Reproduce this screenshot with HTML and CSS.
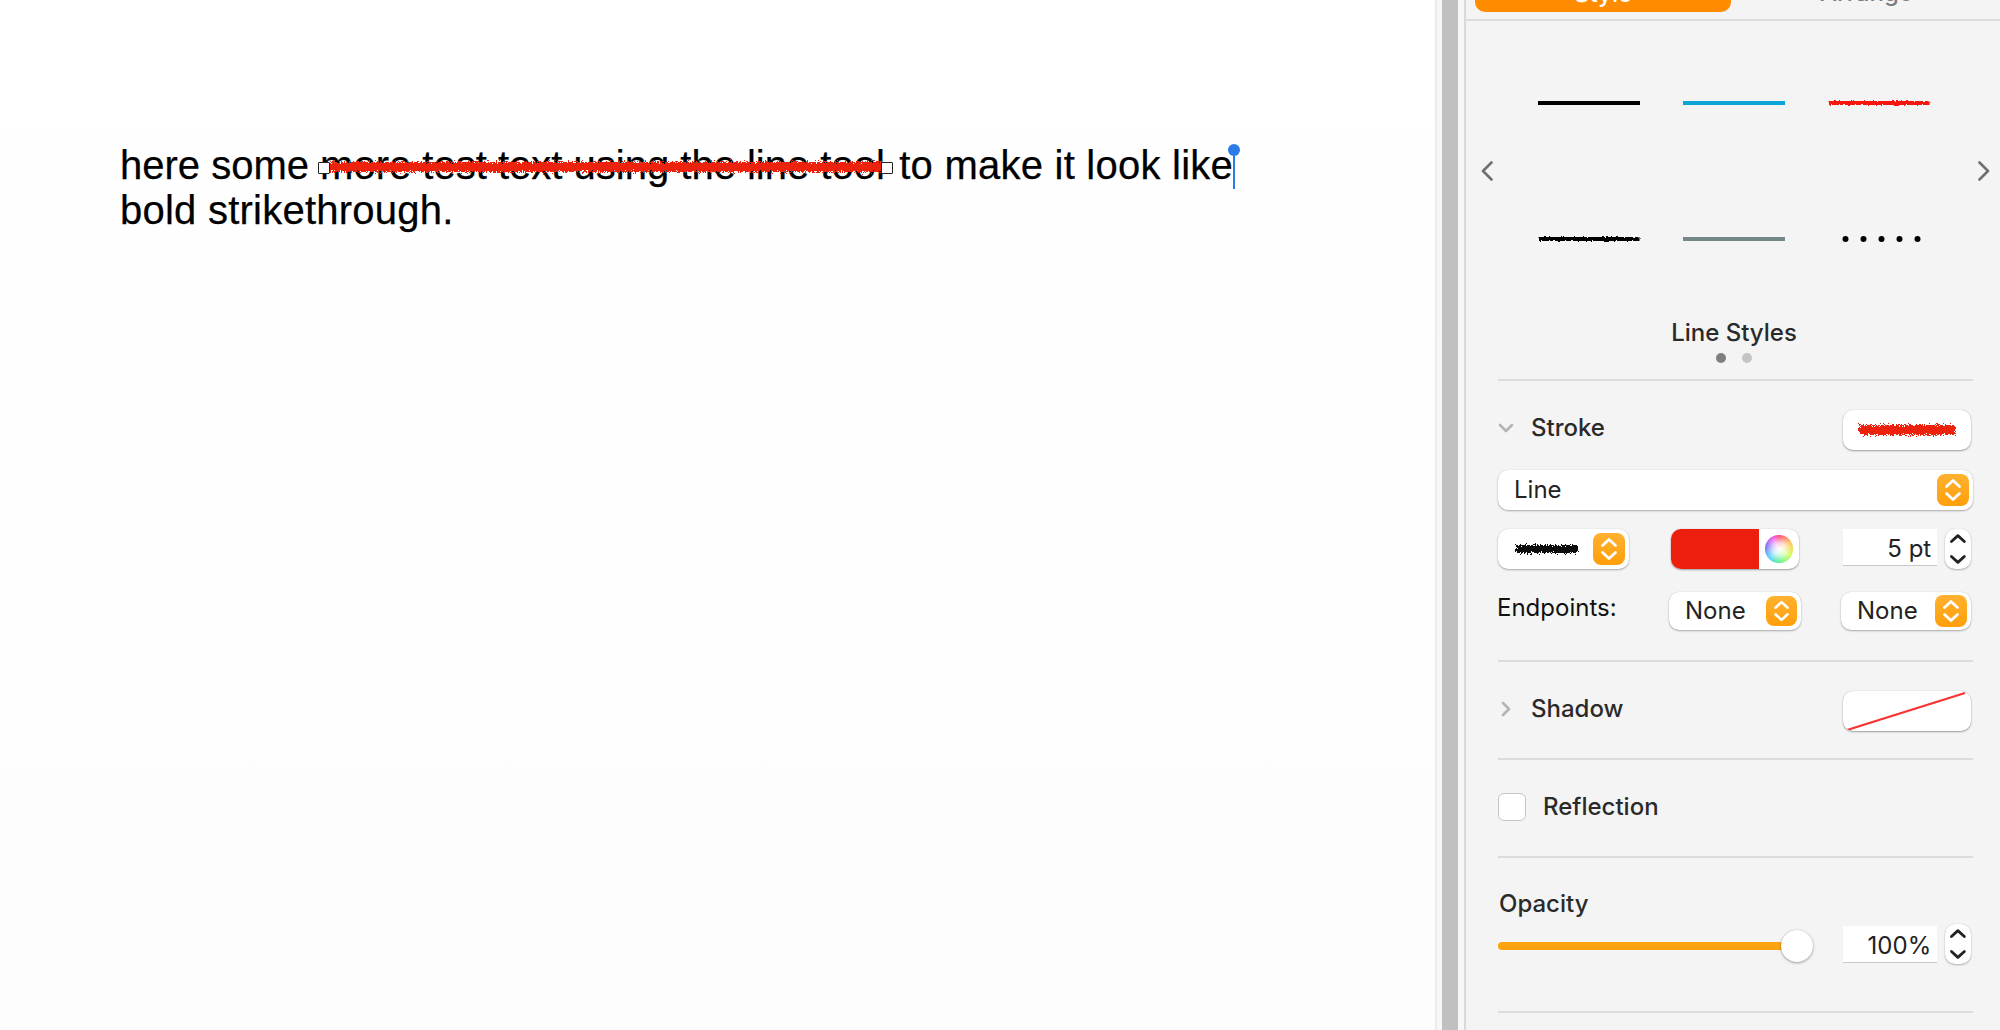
FILE: index.html
```html
<!DOCTYPE html>
<html lang="en">
<head>
<meta charset="utf-8">
<title>Line Styles</title>
<link rel="stylesheet" href="styles.css">
</head>
<body>
<svg class="defs" width="0" height="0" aria-hidden="true">
  <defs>
    <filter id="rough-a" x="-5%" y="-100%" width="110%" height="300%">
      <feTurbulence type="fractalNoise" baseFrequency="0.8" numOctaves="2" seed="4" result="n"/>
      <feDisplacementMap in="SourceGraphic" in2="n" scale="8" result="d"/>
      <feGaussianBlur in="d" stdDeviation="0.4"/>
    </filter>
    <filter id="rough-b" x="-5%" y="-100%" width="110%" height="300%">
      <feTurbulence type="fractalNoise" baseFrequency="0.45" numOctaves="2" seed="9" result="n"/>
      <feDisplacementMap in="SourceGraphic" in2="n" scale="3" result="d"/>
      <feGaussianBlur in="d" stdDeviation="0.2"/>
    </filter>
    <symbol id="updown" viewBox="0 0 32 32">
      <path d="M9.500 12.500 16 6.500l6.500 6M9.500 19.500l6.500 6 6.500-6" fill="none" stroke="#fff" stroke-width="2.800" stroke-linecap="round" stroke-linejoin="round"/>
    </symbol>
    <symbol id="updown-dark" viewBox="0 0 26 40">
      <path d="M6.500 12.500 13 6.500l6.500 6M6.500 27.500l6.500 6 6.500-6" fill="none" stroke="#222" stroke-width="2.800" stroke-linecap="round" stroke-linejoin="round"/>
    </symbol>
  </defs>
</svg>

<main class="canvas">
  <p class="doc">here some <span class="struck">more test text using the line tool<svg class="struck-line" viewBox="0 0 560 16" preserveAspectRatio="none"><rect x="1" y="3" width="558" height="10" fill="#ec2010" filter="url(#rough-a)"/></svg><span class="handle handle-start"></span><span class="handle handle-end"></span></span><span class="tail"> to make it look like<span class="caret"></span> bold strikethrough.</span></p>
</main>

<div class="gutter"><div class="gutter-thumb"></div></div>

<aside class="panel">
  <header class="tabs">
    <div class="tab tab-on">Style</div>
    <div class="tab">Arrange</div>
  </header>

  <section class="carousel">
    <div class="carousel-row">
      <svg class="nav" viewBox="0 0 12 20"><path d="M10.500 1.500 2 10l8.500 8.500" fill="none" stroke="#6f6f6f" stroke-width="2.600" stroke-linecap="round" stroke-linejoin="round"/></svg>
      <div class="swatches">
        <div class="swatch"><svg class="swatch-svg" viewBox="0 0 102 6"><rect y="1" width="102" height="4" fill="#000"/></svg></div>
        <div class="swatch"><svg class="swatch-svg" viewBox="0 0 102 6"><rect y="1" width="102" height="4" fill="#0da5d8"/></svg></div>
        <div class="swatch"><svg class="swatch-svg" viewBox="0 0 102 6"><rect x="0.500" y="1" width="101" height="4" fill="#f5140a" filter="url(#rough-b)"/></svg></div>
        <div class="swatch"><svg class="swatch-svg" viewBox="0 0 102 6"><rect x="0.500" y="1" width="101" height="4" fill="#000" filter="url(#rough-b)"/></svg></div>
        <div class="swatch"><svg class="swatch-svg" viewBox="0 0 102 6"><rect y="1" width="102" height="4" fill="#748887"/></svg></div>
        <div class="swatch"><svg class="swatch-svg" viewBox="0 0 102 6"><g fill="#000"><circle cx="17.500" cy="3" r="3"/><circle cx="35.500" cy="3" r="3"/><circle cx="53.500" cy="3" r="3"/><circle cx="71.500" cy="3" r="3"/><circle cx="89.500" cy="3" r="3"/></g></svg></div>
      </div>
      <svg class="nav" viewBox="0 0 12 20"><path d="M1.500 1.500 10 10l-8.500 8.500" fill="none" stroke="#6f6f6f" stroke-width="2.600" stroke-linecap="round" stroke-linejoin="round"/></svg>
    </div>
    <div class="carousel-label">Line Styles</div>
    <div class="pager"><span class="pager-dot pager-on"></span><span class="pager-dot"></span></div>
  </section>

  <section class="block block-stroke">
    <div class="block-head">
      <div class="block-title">
        <svg class="disclosure" viewBox="0 0 16 16"><path d="M2 5l6 6 6-6" fill="none" stroke="#b4b4b4" stroke-width="2.600" stroke-linecap="round" stroke-linejoin="round"/></svg>
        <span class="label">Stroke</span>
      </div>
      <div class="preview"><svg class="preview-svg" viewBox="0 0 100 14"><rect x="2" y="2" width="96" height="10" fill="#ec2010" filter="url(#rough-a)"/></svg></div>
    </div>
    <div class="select select-full"><span class="select-text">Line</span><svg class="stepper-icon"><use href="#updown"/></svg></div>
    <div class="trio">
      <div class="select select-line"><svg class="mini-line" viewBox="0 0 66 10"><rect x="2" y="1" width="62" height="8" fill="#111" filter="url(#rough-a)"/></svg><svg class="stepper-icon"><use href="#updown"/></svg></div>
      <div class="color-well"><div class="color-red"></div><div class="color-cap"><span class="wheel"></span></div></div>
      <div class="num"><div class="num-field">5 pt</div><svg class="num-step" viewBox="0 0 26 40"><use href="#updown-dark"/></svg></div>
    </div>
    <div class="trio trio-end">
      <div class="label label-end">Endpoints:</div>
      <div class="select select-end"><span class="select-text">None</span><svg class="stepper-icon stepper-small"><use href="#updown"/></svg></div>
      <div class="select select-end select-end-b"><span class="select-text">None</span><svg class="stepper-icon"><use href="#updown"/></svg></div>
    </div>
  </section>

  <section class="block block-shadow">
    <div class="block-head">
      <div class="block-title">
        <svg class="disclosure" viewBox="0 0 16 16"><path d="M5 2l6 6-6 6" fill="none" stroke="#b4b4b4" stroke-width="2.600" stroke-linecap="round" stroke-linejoin="round"/></svg>
        <span class="label">Shadow</span>
      </div>
      <div class="preview preview-none"><svg class="none-svg" viewBox="0 0 128 40"><line x1="4" y1="39" x2="122" y2="2" stroke="#fb3232" stroke-width="2.200"/></svg></div>
    </div>
  </section>

  <section class="block block-reflect">
    <label class="check"><span class="check-box"></span><span class="label label-check">Reflection</span></label>
  </section>

  <section class="block block-opacity">
    <div class="label label-opacity">Opacity</div>
    <div class="opacity-row">
      <div class="slider"><div class="slider-track"></div><div class="slider-thumb"></div></div>
      <div class="num"><div class="num-field">100%</div><svg class="num-step" viewBox="0 0 26 40"><use href="#updown-dark"/></svg></div>
    </div>
  </section>
  <div class="block"></div>
</aside>
</body>
</html>
```

FILE: styles.css
```css
* { box-sizing: border-box; }
html, body { margin: 0; height: 100%; }
body {
  display: flex;
  width: 2000px;
  height: 1030px;
  overflow: hidden;
  background: #fff;
  font-family: Inter, "Liberation Sans", sans-serif;
}
.defs { position: absolute; }

/* document */
.canvas {
  flex: 0 0 1435px;
  height: 100%;
  padding: 143px 0 0 120px;
  background: linear-gradient(#fff, #fdfdfd);
}
.doc {
  margin: 0;
  width: 1150px;
  font: 40px/45px "Liberation Sans", Arial, sans-serif;
  color: #000;
  -webkit-text-stroke: 0.25px #000;
}
.tail { letter-spacing: 0.24px; margin-left: 3px; }
.struck { position: relative; letter-spacing: 0; }
.struck-line {
  position: absolute;
  left: 8px;
  top: 16px;
  width: 558px;
  height: 16px;
  overflow: visible;
}
.handle {
  position: absolute;
  top: 19px;
  width: 12px;
  height: 12px;
  background: #fff;
  border: 1px solid #222;
  border-radius: 1px;
}
.handle-start { left: -2px; }
.handle-end { right: -8px; }
.caret {
  position: relative;
  display: inline-block;
  width: 0;
  height: 0;
}
.caret::before {
  content: "";
  position: absolute;
  left: 0;
  bottom: -10px;
  width: 2px;
  height: 40px;
  background: #2a7de8;
}
.caret::after {
  content: "";
  position: absolute;
  left: -5px;
  bottom: 23px;
  width: 12px;
  height: 12px;
  border-radius: 50%;
  background: #2a7de8;
}

/* gutter */
.gutter {
  flex: 0 0 31px;
  padding-left: 5px;
  background: #f7f7f7;
  border-left: 2px solid #ececec;
  border-right: 2px solid #d9d9d9;
}
.gutter-thumb { width: 16px; height: 100%; background: #c0c0c0; }

/* panel */
.panel {
  flex: 0 0 534px;
  height: 100%;
  background: #f4f4f4;
  color: #2a2a2a;
}
.tabs {
  display: flex;
  height: 21px;
  padding: 0 0 0 9px;
  border-bottom: 2px solid #dcdcdc;
  align-items: flex-start;
}
.tab {
  flex: 0 0 256px;
  height: 12px;
  display: flex;
  justify-content: center;
  align-items: flex-end;
  font-size: 24px;
  font-weight: 500;
  line-height: 24px;
  padding-bottom: 7px;
  color: #7d7d7d;
}
.tab + .tab { flex-basis: 271px; }
.tab-on {
  background: #ff8c00;
  color: #fff;
  border-radius: 0 0 10px 10px;
  padding-bottom: 6px;
}

.carousel { padding: 62px 0 16px; }
.carousel-row {
  display: flex;
  justify-content: space-between;
  align-items: center;
  padding: 0 12px 0 15px;
}
.nav { width: 12px; height: 22px; }
.swatches {
  display: grid;
  grid-template-columns: repeat(3, 102px);
  column-gap: 43px;
  row-gap: 96px;
  margin-left: -3px;
}
.swatch { height: 40px; display: flex; align-items: center; }
.swatch-svg { width: 102px; height: 6px; overflow: visible; }
.carousel-label {
  margin-top: 60px;
  height: 28px;
  line-height: 28px;
  text-align: center;
  font-size: 24px;
  font-weight: 500;
}
.pager {
  display: flex;
  justify-content: center;
  gap: 16px;
  margin-top: 6px;
}
.pager-dot { width: 10px; height: 10px; border-radius: 50%; background: #c4c4c4; }
.pager-on { background: #7f7f7f; }

.block {
  margin: 0 29px 0 32px;
  border-top: 2px solid #dcdcdc;
}
.block-stroke { padding: 29px 0 30px; }
.block-shadow { padding: 29px 0 27px; }
.block-reflect { padding: 33px 0 35px; }
.block-opacity { padding: 34px 0 47px; }

.block-head {
  display: flex;
  justify-content: space-between;
  align-items: center;
  padding-right: 2px;
}
.block-title { display: flex; align-items: center; margin-bottom: 5px; }
.disclosure { width: 16px; height: 16px; margin-right: 17px; }
.label { font-size: 24px; font-weight: 500; line-height: 24px; }

.preview {
  width: 128px;
  height: 40px;
  background: #fff;
  border-radius: 10px;
  box-shadow: 0 1px 2px rgba(0,0,0,.35), 0 0 1px rgba(0,0,0,.2);
  display: flex;
  align-items: center;
  justify-content: center;
  overflow: hidden;
}
.preview-svg { width: 100px; height: 14px; overflow: visible; }
.none-svg { width: 128px; height: 40px; }

.select {
  display: flex;
  align-items: center;
  justify-content: space-between;
  background: #fff;
  border-radius: 10px;
  box-shadow: 0 1px 2px rgba(0,0,0,.3), 0 0 1px rgba(0,0,0,.18);
  padding: 0 4px 0 16px;
  font-size: 24px;
  color: #222;
}
.select-text { line-height: 24px; }
.select-full { height: 40px; margin-top: 20px; }
.stepper-icon {
  width: 32px;
  height: 32px;
  border-radius: 8px;
  background: linear-gradient(#ffb12f, #ff9f0a);
}
.stepper-small { width: 31px; height: 30px; }

.trio {
  display: grid;
  grid-template-columns: 171px 172px 130px;
  margin-top: 19px;
}
.trio-end { margin-top: 23px; align-items: center; }
.select-line { width: 131px; height: 40px; }
.mini-line { width: 66px; height: 10px; overflow: visible; }
.color-well {
  display: flex;
  width: 128px;
  height: 40px;
  margin-left: 2px;
  border-radius: 10px;
  overflow: hidden;
  background: #fff;
  box-shadow: 0 1px 2px rgba(0,0,0,.35), 0 0 1px rgba(0,0,0,.2);
}
.color-red { width: 88px; background: #ec1f0e; }
.color-cap { flex: 1; display: flex; align-items: center; justify-content: center; }
.wheel {
  width: 28px;
  height: 28px;
  border-radius: 50%;
  background:
    radial-gradient(circle, #fff 0, rgba(255,255,255,.75) 30%, rgba(255,255,255,0) 74%),
    conic-gradient(#f36 0, #fb4 60deg, #cf4 120deg, #4e8 180deg, #4cf 230deg, #66f 280deg, #e4e 330deg, #f36 360deg);
}
.num { display: flex; margin-left: 2px; gap: 8px; align-items: flex-start; }
.num-field {
  width: 95px;
  height: 37px;
  background: #fff;
  border-bottom: 1px solid #c9c9c9;
  text-align: right;
  padding-right: 6px;
  font-size: 24px;
  line-height: 40px;
  color: #222;
}
.num-step {
  width: 26px;
  height: 40px;
  background: #fff;
  border-radius: 10px;
  box-shadow: 0 1px 2px rgba(0,0,0,.28), 0 0 1px rgba(0,0,0,.18);
}
.label-end { line-height: 30px; margin: 0 0 6px -1px; color: #111; font-weight: 400; }
.select-end { width: 132px; height: 38px; }
.select-end-b { width: 130px; }

.check { display: flex; align-items: center; }
.check-box {
  width: 28px;
  height: 28px;
  background: #fff;
  border: 1px solid #c6c6c6;
  border-radius: 6px;
}
.label-check { margin-left: 17px; }
.label-opacity { margin-left: 1px; }

.opacity-row {
  display: grid;
  grid-template-columns: 343px 130px;
  margin-top: 8px;
  align-items: center;
}
.opacity-row .num-field { margin-top: 2px; }
.slider {
  position: relative;
  width: 315px;
  height: 32px;
  margin-top: 4px;
  display: flex;
  align-items: center;
}
.slider-track { width: 100%; height: 8px; background: #fca311; border-radius: 4px; }
.slider-thumb {
  position: absolute;
  right: 0;
  top: 0;
  width: 32px;
  height: 32px;
  border-radius: 50%;
  background: #fff;
  box-shadow: 0 1px 3px rgba(0,0,0,.35), 0 0 1px rgba(0,0,0,.2);
}
```
